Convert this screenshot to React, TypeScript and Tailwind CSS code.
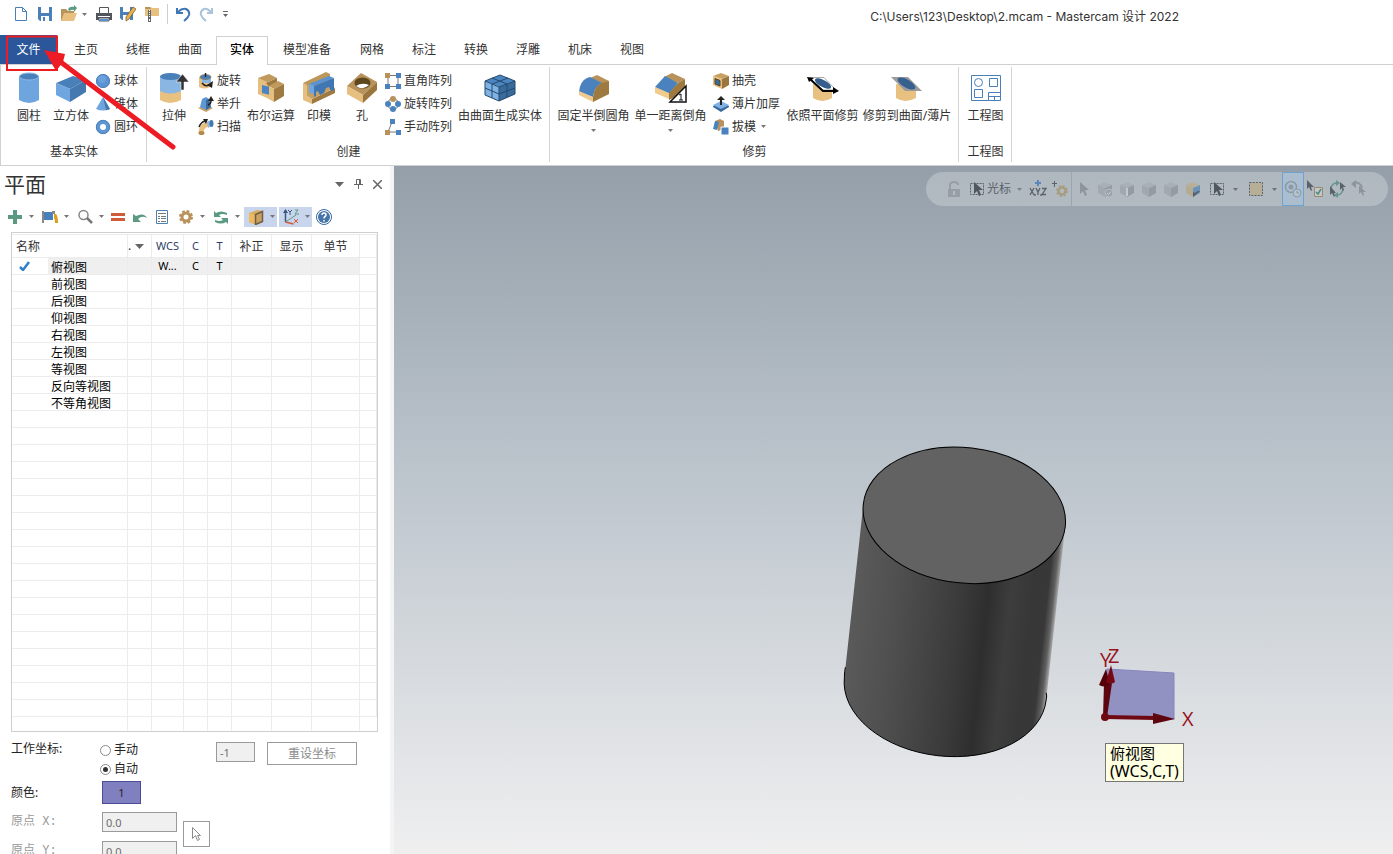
import React from "react";
import { clsx } from "clsx";

type IconProps = { className?: string };

const Svg = ({ size = 16, children }: { size?: number; children: React.ReactNode }) => (
  <svg width={size} height={size} viewBox={`0 0 ${size} ${size}`} fill="none" className="shrink-0" aria-hidden="true">
    {children}
  </svg>
);

const Caret = ({ className = "text-[#777777]" }: IconProps) => (
  <svg width="5" height="3" viewBox="0 0 5 3" className={clsx("shrink-0", className)} aria-hidden="true">
    <path d="M0 0h5L2.5 3z" fill="currentColor" />
  </svg>
);

/* ---------- Quick access icons ---------- */

const NewIcon = () => (
  <Svg>
    <path d="M2.500 1.500h7l4 4v9h-11z" fill="#fff" stroke="#4a7fb5" />
    <path d="M9.500 1.500v4h4" stroke="#4a7fb5" />
  </Svg>
);
const SaveIcon = () => (
  <Svg>
    <path d="M1 1h14v14H3l-2-2z" fill="#4a80b9" />
    <path d="M4 1h8v6H4zM4 10h8v5H4z" fill="#fff" />
    <path d="M6 11h2v4H6z" fill="#4a80b9" />
  </Svg>
);
const OpenIcon = () => (
  <Svg size={18}>
    <path d="M1 4h5l2 2h6v10H1z" fill="#b8935a" />
    <path d="M4 8h13l-3 8H1z" fill="#e8c080" />
    <path d="M8 5q1-4 6-3V0l3 3-3 4V5q-3-1-4 1z" fill="#5a9a80" />
  </Svg>
);
const PrintIcon = () => (
  <Svg>
    <path d="M3.500 1.500h9v6h-9z" fill="#fff" stroke="#555" />
    <path d="M0 7h16v7H0z" fill="#50565c" />
    <path d="M2 10h12v1H2z" fill="#fff" />
    <path d="M3 12h10v3H3z" fill="#fff" stroke="#50565c" />
    <path d="M4 13h8v2H4z" fill="#5590cf" />
  </Svg>
);
const SaveAsIcon = () => (
  <Svg>
    <path d="M0 1h13v13H2l-2-2z" fill="#4a80b9" />
    <path d="M3 1h7v5H3zM3 9h7v5H3z" fill="#fff" />
    <path d="M13 1l3 2-7 10-3 2v-4z" fill="#e8b24e" stroke="#6b5430" strokeWidth=".7" />
  </Svg>
);
const ZipIcon = () => (
  <Svg>
    <path d="M1 1h6l1 1h7v8H1z" fill="#e8c080" />
    <path d="M1 1h5l1 2H1z" fill="#b8935a" />
    <path d="M4 4h3v12H4z" fill="#666" />
    <path d="M5.500 4v8" stroke="#fff" strokeDasharray="1 1" />
    <path d="M5 13h1v2H5z" fill="#fff" />
  </Svg>
);
const UndoIcon = () => (
  <Svg>
    <path d="M2 2v5h6" stroke="#3f77b5" strokeWidth="2" />
    <path d="M3 6q4-4 8-3 4 2 3 6-1 3-5 6" stroke="#3f77b5" strokeWidth="2" />
  </Svg>
);
const RedoIcon = () => (
  <Svg>
    <path d="M13 2v5H8" stroke="#a9c3dc" strokeWidth="2" />
    <path d="M12 6Q8 2 5 3 1 5 2 9q1 3 5 6" stroke="#a9c3dc" strokeWidth="2" />
  </Svg>
);

/* ---------- Ribbon icons, large ---------- */

const CylinderIcon = () => (
  <Svg size={32}>
    <path d="M6 4v24q10 6 20 0V4z" fill="#6fa5de" />
    <ellipse cx="16" cy="4.500" rx="9.500" ry="3.500" fill="#4a80b9" stroke="#8ab8e8" />
  </Svg>
);
const BlockIcon = () => (
  <Svg size={32}>
    <path d="M1 11l17-7 13 4-16 9z" fill="#4a80b9" />
    <path d="M1 11l14 6v13L1 23z" fill="#70a6e0" />
    <path d="M31 8v12L15 30V17z" fill="#4478ae" />
  </Svg>
);
const ExtrudeIcon = () => (
  <Svg size={32}>
    <path d="M2 18v10q10 6 21 0V18z" fill="#e8c080" />
    <path d="M2 4v15q10 5 21 0V4z" fill="#8ab6e4" />
    <ellipse cx="12.500" cy="4.500" rx="10.500" ry="3.500" fill="#4a80b9" />
    <path d="M24.500 2l6.500 8h-5v8h-3v-8h-5z" fill="#333" stroke="#fff" strokeWidth=".5" />
  </Svg>
);
const BooleanIcon = () => (
  <Svg size={32}>
    <path d="M3 6l11-4 8 4-11 5z" fill="#c09a5c" />
    <path d="M3 6l12 5v13l-3 2-9-4z" fill="#e6be80" />
    <path d="M22 6v5l-8 4-3-4z" fill="#9f7a40" />
    <path d="M7 13l8 2v8l-8-2z" fill="#4a84c2" />
    <path d="M14 14l9-5 6 3-10 5z" fill="#c09a5c" />
    <path d="M14 14l5 3v13l-7-4v-3l2 1z" fill="#e6be80" />
    <path d="M19 17l10-5v12l-10 6z" fill="#9f7a40" />
  </Svg>
);
const ImpressIcon = () => (
  <Svg size={32}>
    <path d="M0 11L23 0l4 2v6L4 18z" fill="#bd965a" />
    <path d="M0 11l4 2v11l5 3v5l-9-4z" fill="#e6be80" />
    <path d="M9 27l23-11v5L9 32z" fill="#9f7a40" />
    <path d="M4 14l24-9v8l4 3L9 27l-5-3z" fill="#c8a062" />
    <path d="M6 12l20-8 5 2-20 8z" fill="#5b93d2" />
    <path d="M6 12l5 2v8l-5-1z" fill="#70a6e0" />
    <path d="M11 14L31 6v12l-3 1-2-4-3 1-2 5-4 2-2-4-2 1v4l-2 1z" fill="#3f76b4" />
  </Svg>
);
const HoleIcon = () => (
  <Svg size={32}>
    <path d="M1 14L15 1l16 9-14 13z" fill="#b8925a" />
    <path d="M1 14l16 9v8L1 22z" fill="#e6be80" />
    <path d="M17 23l14-13v8L17 31z" fill="#9a763e" />
    <ellipse cx="16.500" cy="11" rx="8" ry="5.500" fill="#5e461d" />
    <path d="M10 14q6-4 13-1-6 6-13 1z" fill="#fff" />
  </Svg>
);
const SurfaceSolidIcon = () => (
  <Svg size={32}>
    <path d="M1 9l15-6 15 6-15 6z" fill="#4c86c2" />
    <path d="M1 9l14 6v14L1 23z" fill="#7eb2e5" />
    <path d="M31 9v13l-16 7V15z" fill="#386a9c" />
    <path d="M1 9l14 6 16-6-15-6zM1 9v14l14 6 16-7V9M15 15v14M8 6l15 6v13M24 6L8 12v14M1 16l14 6 16-6" stroke="#244a6d" />
  </Svg>
);
const FilletIcon = () => (
  <Svg size={32}>
    <path d="M12 6l7-3 12 6-7 4z" fill="#b8925a" />
    <path d="M1 20Q2 9 9 6l3-1 12 6q-8 4-9 14z" fill="#4a82bf" />
    <path d="M15 25q1-11 9-14l7-2v13l-16 8z" fill="#9f7a40" />
    <path d="M1 19l14 6v5L1 23z" fill="#efcb8e" />
  </Svg>
);
const ChamferIcon = () => (
  <Svg size={32}>
    <path d="M9 5l8-4 13 6-7 4z" fill="#b8925a" />
    <path d="M0 15L10 4l13 7-9 11z" fill="#4a82bf" />
    <path d="M0 15l14 6v6L0 21z" fill="#efcb8e" />
    <path d="M14 21l9-10 7-4v13l-16 8z" fill="#9f7a40" />
    <path d="M31 14v16H15z" fill="#fff" stroke="#111" strokeWidth="1.500" />
    <path d="M24 23l2-1v6m-2 0h4" stroke="#111" />
  </Svg>
);
const TrimPlaneIcon = () => (
  <Svg size={32}>
    <path d="M6 12v14q9 6 19 0V14z" fill="#e8c080" />
    <path d="M2 5.500h15L29 18H16z" fill="#fff" stroke="#aaa" />
    <ellipse cx="16" cy="11.500" rx="9" ry="3.500" transform="rotate(28 16 11.500)" fill="#355e8c" />
    <path d="M3 7l13 12h12" stroke="#000" strokeWidth="2" />
    <path d="M0 5l7 1-5 4zM32 19l-6-4v7z" fill="#000" />
  </Svg>
);
const TrimSurfaceIcon = () => (
  <Svg size={32}>
    <path d="M5 12v14q9 6 20 0V14z" fill="#e8c080" />
    <path d="M0 5h17l14 14H14z" fill="#9b9b9e" />
    <ellipse cx="15.500" cy="11.500" rx="10" ry="4" transform="rotate(30 15.500 11.500)" fill="#37608f" />
  </Svg>
);
const DrawingIcon = () => (
  <Svg size={32}>
    <g stroke="#4a80b9">
      <path d="M1.500 3.500h29v25h-29z" />
      <circle cx="8.500" cy="10.500" r="4" />
      <path d="M19.500 6.500h8v8h-8zM4.500 17.500h8v8h-8zM18.500 20.500h12M18.500 20.500v8M18.500 24.500h12M24.500 24.500v4" />
    </g>
  </Svg>
);

/* ---------- Ribbon icons, small ---------- */

const SphereIcon = () => (
  <Svg>
    <circle cx="8" cy="8" r="7" fill="#5b93d2" />
    <circle cx="7" cy="6" r="4" fill="#6aa0dc" />
    <circle cx="8" cy="8" r="6.500" stroke="#4c80b8" />
  </Svg>
);
const ConeIcon = () => (
  <Svg>
    <path d="M8 1L1 13q7 3 14 0z" fill="#6fa5de" />
    <path d="M8 1l7 12q-2 1-4 1z" fill="#4478ae" />
  </Svg>
);
const TorusIcon = () => (
  <Svg>
    <circle cx="8" cy="8" r="5" stroke="#5e96d3" strokeWidth="4" />
    <circle cx="8" cy="8" r="6.700" stroke="#4c80b8" />
  </Svg>
);
const RevolveIcon = () => (
  <Svg>
    <path d="M1 4v10q5 3 11 0V4z" fill="#e8c080" />
    <path d="M4 4h9v6H4z" fill="#8ab6e4" />
    <ellipse cx="7.500" cy="4" rx="5.500" ry="2.500" fill="#4a80b9" stroke="#8a6c38" strokeWidth=".6" />
    <path d="M7.500 0v4M4 10q3 4 7 2" stroke="#222" strokeWidth="1.500" />
    <path d="M15 8l-1 7-5-3z" fill="#222" />
  </Svg>
);
const LoftIcon = () => (
  <Svg>
    <path d="M0 12l8-3 7 3-7 4z" fill="#c8a062" />
    <path d="M4 3l4-2 3 2 2 8-5 3-6-3z" fill="#5f97d5" />
    <path d="M8 4l3-1 2 8-5 3z" fill="#386a9c" />
    <path d="M10 9q3-1 3-4" stroke="#222" strokeWidth="1.500" />
    <path d="M13 0l3 5h-6z" fill="#222" />
  </Svg>
);
const SweepIcon = () => (
  <Svg>
    <path d="M3 14q0-8 8-9" stroke="#e8c080" strokeWidth="5" />
    <ellipse cx="3.500" cy="14" rx="3" ry="2" fill="#b18a4c" />
    <path d="M9 3l4-2 2 5-5 3z" fill="#8ab6e4" />
    <ellipse cx="13.500" cy="4.500" rx="2" ry="3.500" fill="#4478ae" />
    <path d="M1 8q2-5 6-6" stroke="#222" strokeWidth="1.500" />
    <path d="M5 0h5L8 5z" fill="#222" />
  </Svg>
);
const RectPatternIcon = () => (
  <Svg>
    <path d="M3 2.500h10v11H3z" stroke="#777" />
    <path d="M0 0h5v5H0z" fill="#b8925a" />
    <path d="M11 0h5v5h-5zM0 11h5v5H0zM11 11h5v5h-5z" fill="#4a82bf" />
  </Svg>
);
const RoundPatternIcon = () => (
  <Svg>
    <circle cx="8" cy="8" r="5.500" stroke="#777" />
    <circle cx="8" cy="3" r="3" fill="#b8925a" />
    <circle cx="3" cy="8" r="3" fill="#4a82bf" />
    <circle cx="13" cy="8" r="3" fill="#4a82bf" />
    <circle cx="8" cy="13" r="3" fill="#4a82bf" />
  </Svg>
);
const ManualPatternIcon = () => (
  <Svg>
    <path d="M7 3L3 13h10" stroke="#777" />
    <path d="M5 0h5v5H5zM11 11h5v5h-5z" fill="#4a82bf" />
    <path d="M0 11h5v5H0z" fill="#b8925a" />
  </Svg>
);
const ShellIcon = () => (
  <Svg>
    <path d="M0 3l8-3 8 3-7 3z" fill="#c8a062" />
    <path d="M9 6l7-3v9l-7 4z" fill="#9a763e" />
    <path d="M0 3l9 3v10l-9-4z" fill="#e6be80" />
    <path d="M2 5.500l5 2v5.500l-5-2z" fill="#386a9c" stroke="#5e461d" />
  </Svg>
);
const ThickenIcon = () => (
  <Svg>
    <path d="M0 10l8-4 8 4v1l-8 5-8-5z" fill="#386a9c" />
    <path d="M0 9l8-4 8 4-8 4z" fill="#7eb2e5" />
    <path d="M8 0l4 4H9v5H7V4H4z" fill="#222" />
  </Svg>
);
const DraftIcon = () => (
  <Svg>
    <path d="M2 2l5-2 4 2v8l-6 2z" fill="#b8925a" />
    <path d="M2 2l4 1-2 8-4-1z" fill="#4a82bf" />
    <path d="M8 8h8v8H8z" fill="#4a82bf" stroke="#fff" />
  </Svg>
);

/* ---------- Panel toolbar icons ---------- */

const PlusIcon = () => (
  <Svg>
    <path d="M6 1h4v5h5v4h-5v5H6v-5H1V6h5z" fill="#5a9a80" />
  </Svg>
);
const FlagIcon = () => (
  <Svg>
    <path d="M1 2v12" stroke="#888" strokeWidth="2" />
    <path d="M2 3h9v8H2z" fill="#4a80b9" />
    <path d="M10 2h3v3h-3z" fill="#888" />
    <path d="M12 5h2q2 2 2 9h-3q0-4-1-5z" fill="#d8a01d" />
  </Svg>
);
const SearchIcon = () => (
  <Svg>
    <circle cx="6.500" cy="6" r="4.500" stroke="#888" strokeWidth="1.500" />
    <path d="M10 9l5 5" stroke="#777" strokeWidth="2.500" />
  </Svg>
);
const EqualIcon = () => (
  <Svg>
    <path d="M1 4h14v3H1zM1 9h14v3H1z" fill="#d15a38" />
  </Svg>
);
const BackIcon = () => (
  <Svg>
    <path d="M1 5v8h8L6 10q4-4 9-1-3-6-11-2z" fill="#5a9a80" />
  </Svg>
);
const ListIcon = () => (
  <Svg>
    <path d="M2.500 1.500h11v13h-11z" stroke="#4a80b9" />
    <path d="M4 4.500h8M4 7.500h2m1 0h5M4 9.500h2m1 0h5M4 12.500h2m1 0h5" stroke="#777" />
  </Svg>
);
const GearIcon = ({ color = "#b8925a" }: { color?: string }) => (
  <Svg>
    <circle cx="8" cy="8" r="4" stroke={color} strokeWidth="3" />
    <circle cx="8" cy="8" r="6" stroke={color} strokeWidth="2" strokeDasharray="2.700 2.010" />
  </Svg>
);
const RefreshIcon = () => (
  <Svg>
    <path d="M1 2l2 2q5-3 11 0v2Q9 4 6 6l2 2H1z" fill="#5a9a80" />
    <path d="M15 15l-2-2q-5 3-11 0v-2q5 2 8 0L8 9h7z" fill="#5a9a80" />
  </Svg>
);
const PlaneBlockIcon = () => (
  <Svg>
    <path d="M1 4l8-3 6 1v11l-7 3-7-3z" fill="#d9ac62" />
    <path d="M1 4l6 2v9l-6-2z" fill="#efb95e" />
    <path d="M7.500 5.500l7-3v10l-7 3z" fill="#c8a062" stroke="#6e6048" strokeWidth="1.500" />
  </Svg>
);
const AxesIcon = () => (
  <Svg>
    <path d="M2.500 1v12" stroke="#39587d" strokeWidth="1.500" />
    <path d="M2.500 13L13 6" stroke="#5a9a80" />
    <path d="M2.500 13l8 2" stroke="#d15a38" strokeWidth="1.500" />
    <path d="M0 4l2.500-4L5 4z" fill="#39587d" />
    <path d="M5 1l2 2 2-2M7 3v3" stroke="#39587d" />
    <path d="M12 1h3l-3 4h4" stroke="#5a9a80" />
    <path d="M11 10l4 4m0-4l-4 4" stroke="#d15a38" />
  </Svg>
);
const HelpIcon = () => (
  <Svg>
    <circle cx="8" cy="8" r="7.500" stroke="#39699f" />
    <circle cx="8" cy="8" r="6" fill="#4675a9" />
    <path d="M6 6q0-2 2-2t2 2q0 1-1 1.500T8 9.500M8 11v1.500" stroke="#fff" strokeWidth="1.500" />
  </Svg>
);

/* ---------- Selection bar icons ---------- */

const pointer = "M5 1v12l3-3 2 5 2-1-2-5h4z";

const LockIcon = () => (
  <Svg>
    <path d="M4 8V4q0-3 4-3t4 3" stroke="#979ea5" strokeWidth="2" />
    <path d="M2 8h12v8H2z" fill="#979ea5" />
    <path d="M7 10h2v4H7z" fill="#b3bac1" />
  </Svg>
);
const BoxSelectIcon = () => (
  <Svg>
    <path d="M1.500 2.500h13v11h-13z" stroke="#59616a" strokeDasharray="2 1" />
    <path d={pointer} fill="#4f5760" />
  </Svg>
);
const XyzIcon = () => (
  <Svg size={18}>
    <path d="M9 0v6M6 3h6" stroke="#5c87b8" strokeWidth="2" />
    <path d="M1 8l4 7M5 8l-4 7M7 8l2 4 2-4M9 12v3M13 8.500h4l-4 6h4M6 14v2M12 14v2" stroke="#59616a" strokeWidth="1.300" />
  </Svg>
);
const GearAddIcon = () => (
  <Svg size={18}>
    <path d="M3.500 1v6M1 3.500h5" stroke="#59616a" />
    <circle cx="11" cy="11" r="3.500" stroke="#a79d7f" strokeWidth="2.500" />
    <circle cx="11" cy="11" r="5" stroke="#a79d7f" strokeWidth="2" strokeDasharray="2 1.930" />
  </Svg>
);
const PointerIcon = () => (
  <Svg>
    <path d={pointer} fill="#8d949c" />
  </Svg>
);
const CubeIcon = ({ variant = "plain" }: { variant?: "plain" | "edge" | "check" | "color" }) => (
  <Svg>
    <path d="M1 4l7-3 7 3-7 3z" fill={variant === "color" ? "#b9b09a" : "#a9b0b7"} />
    <path d="M1 4l7 3v9l-7-4z" fill={variant === "color" ? "#b5ab92" : "#a1a8af"} />
    <path d="M15 4v8l-7 4V7z" fill={variant === "color" ? "#6c93b6" : "#949ba2"} />
    {variant === "edge" && <path d="M8 7v8" stroke="#c3c9ce" strokeWidth="2" />}
    {variant === "check" && (
      <>
        <circle cx="12" cy="12" r="4" fill="#9aa1a8" stroke="#b9bfc5" />
        <path d="M10 12l1.500 1.500L14 10.500" stroke="#d0d4d8" />
      </>
    )}
    {variant === "color" && <path d="M15 10l-7 6v-5l2 1 3-2z" fill="#555d66" />}
  </Svg>
);
const AreaIcon = () => (
  <Svg>
    <path d="M1.500 1.500h13v13h-13z" fill="#b7ae98" stroke="#59616a" strokeDasharray="2 1.200" />
  </Svg>
);
const TargetClockIcon = () => (
  <Svg size={18}>
    <circle cx="7" cy="7" r="5.500" stroke="#8c9aa6" strokeWidth="1.500" />
    <circle cx="7" cy="7" r="2.500" fill="#8c9aa6" />
    <circle cx="13" cy="13" r="4" fill="#b4c2ce" stroke="#8c9aa6" />
    <path d="M13 11v2h2" stroke="#8c9aa6" />
  </Svg>
);
const ClipboardIcon = () => (
  <Svg size={18}>
    <path d="M1 0v9l2-2 2 4 1-1-1-3h3z" fill="#59616a" />
    <path d="M8.500 7.500h8v9h-8z" fill="#c4c8cc" stroke="#9b8b69" />
    <path d="M10 12l2 2 3-5" stroke="#4a8f7a" strokeWidth="1.500" />
  </Svg>
);
const CycleIcon = () => (
  <Svg size={18}>
    <path d="M3 8q1-5 6-5M15 9q-1 6-6 6" stroke="#66958a" strokeWidth="1.500" />
    <path d="M8 0l4 3-4 3zM10 12l-4 3 4 3z" fill="#66958a" />
    <path d="M2 6v9l2-2 2 4 1-1-1-3h2zM12 2v8l2-2 1 3 1-1-1-3h3z" fill="#59616a" />
  </Svg>
);
const UndoSelectIcon = () => (
  <Svg size={18}>
    <path d="M3 3q7-2 9 5" stroke="#8d949c" strokeWidth="2" />
    <path d="M1 4l5-4v8z" fill="#8d949c" />
    <path d="M9 6v8l2-2 2 4 1-1-1-3h3z" fill="#8d949c" />
  </Svg>
);

/* ---------- Ribbon ---------- */

const BigButton = ({
  icon,
  label,
  width,
  menu,
}: {
  icon: React.ReactNode;
  label: string;
  width: string;
  menu?: boolean;
}) => (
  <button type="button" className={clsx("flex shrink-0 flex-col items-center whitespace-nowrap", width)}>
    {icon}
    <span className="mt-1 leading-4">{label}</span>
    {menu && <Caret className="mt-[5px] text-[#777777]" />}
  </button>
);

type SmallItem = { icon: React.ReactNode; label: string; menu?: boolean };

const SmallColumn = ({ items, className }: { items: SmallItem[]; className?: string }) => (
  <div className={clsx("-mt-[3px] flex shrink-0 flex-col", className)}>
    {items.map((item) => (
      <button key={item.label} type="button" className="flex h-[23px] items-center gap-[3px] whitespace-nowrap leading-4">
        {item.icon}
        {item.label}
        {item.menu && <Caret className="ml-[2px] text-[#777777]" />}
      </button>
    ))}
  </div>
);

const RibbonGroup = ({
  title,
  className,
  children,
}: {
  title: string;
  className?: string;
  children: React.ReactNode;
}) => (
  <section className="relative flex shrink-0 flex-col pb-[3px] after:absolute after:right-0 after:top-[2px] after:bottom-[3px] after:w-px after:bg-[#d5d5d5]">
    <div className={clsx("flex flex-1 items-start pt-[7px]", className)}>{children}</div>
    <h2 className="text-center leading-5">{title}</h2>
  </section>
);

const tabs = ["主页", "线框", "曲面", "实体", "模型准备", "网格", "标注", "转换", "浮雕", "机床", "视图"];

const Ribbon = () => (
  <div className="flex h-[101px] shrink-0 border-b border-l border-[#d0d0d0]">
    <RibbonGroup title="基本实体" className="pl-[7px] pr-[9px]">
      <BigButton icon={<CylinderIcon />} label="圆柱" width="w-[42px]" />
      <BigButton icon={<BlockIcon />} label="立方体" width="w-[42px]" />
      <SmallColumn
        className="ml-[3px]"
        items={[
          { icon: <SphereIcon />, label: "球体" },
          { icon: <ConeIcon />, label: "锥体" },
          { icon: <TorusIcon />, label: "圆环" },
        ]}
      />
    </RibbonGroup>
    <RibbonGroup title="创建" className="px-[6px]">
      <BigButton icon={<ExtrudeIcon />} label="拉伸" width="w-[42px]" />
      <SmallColumn
        className="ml-[3px] mr-1"
        items={[
          { icon: <RevolveIcon />, label: "旋转" },
          { icon: <LoftIcon />, label: "举升" },
          { icon: <SweepIcon />, label: "扫描" },
        ]}
      />
      <BigButton icon={<BooleanIcon />} label="布尔运算" width="w-[52px]" />
      <BigButton icon={<ImpressIcon />} label="印模" width="w-[44px]" />
      <BigButton icon={<HoleIcon />} label="孔" width="w-[42px]" />
      <SmallColumn
        className="ml-[2px] mr-1"
        items={[
          { icon: <RectPatternIcon />, label: "直角阵列" },
          { icon: <RoundPatternIcon />, label: "旋转阵列" },
          { icon: <ManualPatternIcon />, label: "手动阵列" },
        ]}
      />
      <BigButton icon={<SurfaceSolidIcon />} label="由曲面生成实体" width="w-[88px]" />
    </RibbonGroup>
    <RibbonGroup title="修剪" className="pl-[5px] pr-[6px]">
      <BigButton icon={<FilletIcon />} label="固定半倒圆角" width="w-[77px]" menu />
      <BigButton icon={<ChamferIcon />} label="单一距离倒角" width="w-[77px]" menu />
      <SmallColumn
        className="mx-1"
        items={[
          { icon: <ShellIcon />, label: "抽壳" },
          { icon: <ThickenIcon />, label: "薄片加厚" },
          { icon: <DraftIcon />, label: "拔模", menu: true },
        ]}
      />
      <BigButton icon={<TrimPlaneIcon />} label="依照平面修剪" width="w-[77px]" />
      <BigButton icon={<TrimSurfaceIcon />} label="修剪到曲面/薄片" width="w-[92px]" />
    </RibbonGroup>
    <RibbonGroup title="工程图">
      <BigButton icon={<DrawingIcon />} label="工程图" width="w-[53px]" />
    </RibbonGroup>
  </div>
);

/* ---------- Planes panel ---------- */

const planes = ["俯视图", "前视图", "后视图", "仰视图", "右视图", "左视图", "等视图", "反向等视图", "不等角视图"];
const emptyRows = Array.from({ length: 18 }, (_, i) => i);

const ToolButton = ({
  icon,
  label,
  menu,
  active,
}: {
  icon: React.ReactNode;
  label: string;
  menu?: boolean;
  active?: boolean;
}) => (
  <button
    type="button"
    aria-label={label}
    className={clsx("flex h-5 items-center gap-[6px]", menu ? "w-[33px] pl-1" : "w-5 justify-center", active && "bg-[#c8d5ed]")}
  >
    {icon}
    {menu && <Caret />}
  </button>
);

const PlanesTable = () => {
  const cell = "border-b border-r border-[#ececec] text-center font-normal";
  const latinHead = clsx(cell, "p-0 text-[11px] text-[#2d3f66]");
  return (
    <div className="ml-[11px] mr-[16px] h-[500px] overflow-hidden border border-[#cfcfcf] pt-px">
      <table className="w-full table-fixed border-separate border-spacing-0 border-t border-[#ececec] text-[12px] leading-4">
        <colgroup>
          <col className="w-[116px]" />
          <col className="w-[24px]" />
          <col className="w-[32px]" />
          <col className="w-[24px]" />
          <col className="w-[24px]" />
          <col className="w-[40px]" />
          <col className="w-[40px]" />
          <col className="w-[48px]" />
          <col />
        </colgroup>
        <thead className="text-[#333333]">
          <tr className="h-[23px]">
            <th className="border-b border-r border-[#ececec] pl-1 pt-[2px] text-left font-normal">名称</th>
            <th className={clsx(cell, "p-0")}>
              <span className="flex items-center gap-1">
                .
                <svg width="9" height="5" viewBox="0 0 9 5" aria-hidden="true">
                  <path d="M0 0h9L4.500 5z" fill="#666" />
                </svg>
              </span>
            </th>
            <th className={latinHead}>WCS</th>
            <th className={latinHead}>C</th>
            <th className={latinHead}>T</th>
            <th className={clsx(cell, "pt-[2px]")}>补正</th>
            <th className={clsx(cell, "pt-[2px]")}>显示</th>
            <th className={clsx(cell, "pt-[2px]")}>单节</th>
            <th className={cell} />
          </tr>
        </thead>
        <tbody className="text-black">
          {planes.map((name, i) => {
            const shade = i === 0 ? "bg-[#efefef]" : "";
            const c = clsx(cell, "p-0 text-[11px]", shade);
            return (
              <tr key={name} className="h-[17px]">
                <td className="border-b border-r border-[#ececec] p-0">
                  <div className="flex h-4">
                    <span className="flex w-[36px] shrink-0 items-center justify-center pr-[10px]">
                      {i === 0 && (
                        <svg width="12" height="10" viewBox="0 0 12 10" fill="none" aria-label="当前平面">
                          <path d="M1 6l3 3 6-8" stroke="#2f80c8" strokeWidth="2.500" />
                        </svg>
                      )}
                    </span>
                    <span className={clsx("flex-1 whitespace-nowrap pl-[3px] pt-[2px]", shade)}>{name}</span>
                  </div>
                </td>
                <td className={c} />
                <td className={c}>{i === 0 && "W..."}</td>
                <td className={c}>{i === 0 && "C"}</td>
                <td className={c}>{i === 0 && "T"}</td>
                <td className={c} />
                <td className={c} />
                <td className={c} />
                <td className={cell} />
              </tr>
            );
          })}
          {emptyRows.map((row) => (
            <tr key={row} className="h-[17px]">
              {Array.from({ length: 9 }, (_, i) => (
                <td key={i} className={cell} />
              ))}
            </tr>
          ))}
        </tbody>
      </table>
      {/* column rules run on below the last full row */}
      <div className="ml-[115px] flex h-4">
        <span className="w-px bg-[#ececec]" />
        <span className="w-[24px] border-r border-[#ececec]" />
        <span className="w-[32px] border-r border-[#ececec]" />
        <span className="w-[24px] border-r border-[#ececec]" />
        <span className="w-[24px] border-r border-[#ececec]" />
        <span className="w-[40px] border-r border-[#ececec]" />
        <span className="w-[40px] border-r border-[#ececec]" />
        <span className="w-[48px] border-r border-[#ececec]" />
      </div>
    </div>
  );
};

const originFields = [
  { id: "origin-x", label: "原点 X:" },
  { id: "origin-y", label: "原点 Y:" },
];

const PlanesForm = () => (
  <form className="grid grid-cols-[91px_1fr] pl-[11px] pt-[10px] text-[12px] leading-4 text-[#222222]">
    <span className="-mt-px">工作坐标:</span>
    <div className="flex items-start">
      <div className="-ml-[2px] flex w-[116px] flex-col gap-[3px]">
        {["手动", "自动"].map((mode) => (
          <label key={mode} className="flex items-center gap-[3px]">
            <input
              type="radio"
              name="mode"
              defaultChecked={mode === "自动"}
              className="size-[11px] appearance-none rounded-full border border-[#8a8a8a] bg-white bg-clip-content p-[2px] checked:bg-[#333333]"
            />
            {mode}
          </label>
        ))}
      </div>
      <input
        aria-label="工作坐标"
        defaultValue="-1"
        disabled
        className="h-5 w-[39px] border border-[#9a9a9a] bg-[#f0f0f0] pl-[3px] text-[11px] text-[#6d6d6d]"
      />
      <button type="button" disabled className="ml-3 h-[23px] w-[90px] border border-[#9a9a9a] text-[#8c8c8c]">
        重设坐标
      </button>
    </div>
    <span className="pt-[8px]">颜色:</span>
    <button type="button" aria-label="颜色" className="mt-1 h-[23px] w-[39px] border border-[#4b4b98] bg-[#807fbf] text-[11px]">
      1
    </button>
    <div className="flex flex-col gap-[13px] pt-[10px] font-['Liberation_Mono','Noto_Sans_CJK_SC',monospace] text-[#9a9a9a]">
      {originFields.map(({ id, label }) => (
        <label key={id} htmlFor={id} className="whitespace-nowrap">
          {label}
        </label>
      ))}
    </div>
    <div className="flex items-start gap-[6px] pt-2">
      <div className="flex flex-col gap-[9px]">
        {originFields.map(({ id }) => (
          <input
            key={id}
            id={id}
            defaultValue="0.0"
            disabled
            className="h-5 w-[75px] border border-[#9a9a9a] bg-[#f0f0f0] pl-[3px] text-[11px] text-[#6d6d6d]"
          />
        ))}
      </div>
      <button type="button" aria-label="选择原点" className="mt-[9px] flex h-[26px] w-[27px] items-center justify-center border border-[#9a9a9a]">
        <svg width="11" height="16" viewBox="0 0 11 16" fill="none" aria-hidden="true">
          <path d="M1.500 1.500v11l3-3 2 5 2-1-2-4h3z" stroke="#8c8c8c" />
        </svg>
      </button>
    </div>
  </form>
);

const PlanesPanel = () => (
  <aside className="w-[394px] shrink-0 overflow-hidden border-r-4 border-[#f4f4f4] bg-white">
    <div className="-mr-1">
      <div className="flex h-9 items-center pl-1 pr-[10px]">
        <h1 className="flex-1 text-[21px] leading-8 text-[#333333]">平面</h1>
        <div className="flex items-center gap-[10px] text-[#666666]">
          <button type="button" aria-label="菜单">
            <svg width="9" height="5" viewBox="0 0 9 5" aria-hidden="true">
              <path d="M0 0h9L4.500 5z" fill="currentColor" />
            </svg>
          </button>
          <button type="button" aria-label="固定">
            <svg width="9" height="10" viewBox="0 0 9 10" fill="none" stroke="currentColor" aria-hidden="true">
              <path d="M2.500 5.500v-5h4v5M5.500.500v5M0 5.500h9M4.500 6v4" />
            </svg>
          </button>
          <button type="button" aria-label="关闭" className="pr-[2px]">
            <svg width="9" height="9" viewBox="0 0 9 9" fill="none" stroke="currentColor" strokeWidth="1.500" aria-hidden="true">
              <path d="M0 0l9 9M9 0L0 9" />
            </svg>
          </button>
        </div>
      </div>
      <div className="flex h-[30px] items-center gap-[2px] pb-px pl-[3px]">
        <ToolButton icon={<PlusIcon />} label="新建平面" menu />
        <ToolButton icon={<FlagIcon />} label="选择车床平面" menu />
        <ToolButton icon={<SearchIcon />} label="查找" menu />
        <ToolButton icon={<EqualIcon />} label="设为相等" />
        <ToolButton icon={<BackIcon />} label="重设" />
        <ToolButton icon={<ListIcon />} label="属性" />
        <ToolButton icon={<GearIcon />} label="显示选项" menu />
        <ToolButton icon={<RefreshIcon />} label="跟随规则" menu />
        <ToolButton icon={<PlaneBlockIcon />} label="截面视图" menu active />
        <ToolButton icon={<AxesIcon />} label="显示指针" menu active />
        <ToolButton icon={<HelpIcon />} label="帮助" />
      </div>
      <PlanesTable />
      <PlanesForm />
    </div>
  </aside>
);

/* ---------- Viewport ---------- */

const BarButton = ({ icon, label, active }: { icon: React.ReactNode; label: string; active?: boolean }) => (
  <button
    type="button"
    aria-label={label}
    className={clsx(
      "flex h-[34px] w-[22px] shrink-0 items-center justify-center",
      active && "border border-[#6ea3cf] bg-[#abbecf]"
    )}
  >
    {icon}
  </button>
);

const SelectionBar = () => (
  <div className="absolute right-[5px] top-[6px] flex h-[34px] items-center rounded-full bg-white/25 pl-[17px] pr-[18px]">
    <BarButton icon={<LockIcon />} label="锁定" />
    <button type="button" className="flex h-[34px] w-[62px] shrink-0 items-center gap-[2px] pl-1 leading-4 text-[#59616a]">
      <BoxSelectIcon />
      光标
      <Caret className="ml-1 text-[#7b838b]" />
    </button>
    <BarButton icon={<XyzIcon />} label="坐标输入" />
    <BarButton icon={<GearAddIcon />} label="选择设置" />
    <span className="h-full w-px bg-[#9ca4ac]" />
    <BarButton icon={<PointerIcon />} label="选择" />
    <BarButton icon={<CubeIcon variant="check" />} label="选择实体" />
    <BarButton icon={<CubeIcon variant="edge" />} label="选择边缘" />
    <BarButton icon={<CubeIcon />} label="选择面" />
    <BarButton icon={<CubeIcon />} label="选择主体" />
    <BarButton icon={<CubeIcon variant="color" />} label="选择背面" />
    <span className="w-[2px]" />
    <BarButton icon={<BoxSelectIcon />} label="选择方式" />
    <span className="flex w-[17px] justify-center pr-[2px]">
      <Caret className="text-[#69717a]" />
    </span>
    <BarButton icon={<AreaIcon />} label="范围" />
    <span className="flex w-[15px] justify-center">
      <Caret className="text-[#69717a]" />
    </span>
    <BarButton icon={<TargetClockIcon />} label="最近选择" active />
    <BarButton icon={<ClipboardIcon />} label="验证选择" />
    <BarButton icon={<CycleIcon />} label="反向选择" />
    <BarButton icon={<UndoSelectIcon />} label="上次选择" />
  </div>
);

const SolidCylinder = () => (
  <svg className="absolute left-[446px] top-[274px]" width="230" height="320" viewBox="0 0 230 320" aria-label="圆柱实体">
    <defs>
      <linearGradient id="side" gradientUnits="userSpaceOnUse" x1="23.400" y1="64" x2="225.200" y2="86.100">
        <stop offset="0" stopColor="#5a5a5a" />
        <stop offset=".08" stopColor="#565656" />
        <stop offset=".2" stopColor="#505050" />
        <stop offset=".37" stopColor="#454545" />
        <stop offset=".53" stopColor="#3a3a3a" />
        <stop offset=".66" stopColor="#2e2e2e" />
        <stop offset=".77" stopColor="#3d3d3d" />
        <stop offset=".88" stopColor="#373737" />
        <stop offset=".95" stopColor="#383838" />
        <stop offset=".98" stopColor="#606060" />
        <stop offset="1" stopColor="#a8a8a8" />
      </linearGradient>
    </defs>
    {/* radii a touch under half the chord, so the arc is an exact half ellipse */}
    <path d="M23.400 64L4.400 237.200A101.500 67.600 6.450 0 0 206.200 259.800L225.200 86.600z" fill="url(#side)" />
    <path d="M4.400 237.200A101.500 67.600 6.450 0 0 206.200 259.800" fill="none" stroke="#000" />
    <path d="M4.400 237.200q0-6 1-10M206.200 259.800q1-4 0-7" fill="none" stroke="#000" />
    <ellipse cx="124.300" cy="75.300" rx="101.600" ry="67.700" transform="rotate(6.450 124.300 75.300)" fill="#626262" stroke="#000" />
  </svg>
);

const AxisGnomon = () => (
  <svg
    className="absolute left-[701px] top-[469px] font-['Open_Sans',sans-serif]"
    width="110"
    height="105"
    viewBox="0 -10 110 105"
    aria-label="坐标轴"
  >
    <path d="M12 24l67 4v46l-68-3z" fill="#9292c2" stroke="#8585bd" />
    <path d="M10 72l1-34M10 72l5-34" stroke="#5e0610" strokeWidth="4" />
    <path d="M10 72l50 1" stroke="#6e0913" strokeWidth="4" />
    <path d="M11 24l4 16q-5 3-11 0z" fill="#540008" />
    <path d="M16 20l4 17q-4 3-9 0z" fill="#780812" />
    <path d="M58 68l22 6-22 5z" fill="#5e0610" />
    <circle cx="10" cy="72" r="4" fill="#6e0913" />
    <g fill="#96131b" fontSize="20">
      <text x="5" y="22">Y</text>
      <text x="13" y="18">Z</text>
      <text x="87" y="81">X</text>
    </g>
  </svg>
);

const Viewport = () => (
  <main className="relative min-w-0 flex-1 overflow-hidden bg-linear-to-b/srgb from-[#949fa9] via-[#b8c1c9] via-40% to-[#efeff0]">
    <SelectionBar />
    <SolidCylinder />
    <AxisGnomon />
    <div role="tooltip" className="absolute left-[711px] top-[577px] border border-[#767676] bg-[#ffffe1] px-1 text-black">
      <p className="text-[15px] leading-[18px]">俯视图</p>
      <p className="pb-px text-[16px] leading-[18px]">(WCS,C,T)</p>
    </div>
  </main>
);

/* ---------- App ---------- */

const TitleBar = () => (
  <header className="flex h-[35px] shrink-0 items-center pl-[13px]">
    <div className="-mt-[7px] flex items-center">
      <button type="button" aria-label="新建"><NewIcon /></button>
      <button type="button" aria-label="保存" className="ml-2"><SaveIcon /></button>
      <button type="button" aria-label="打开" className="ml-[7px] flex items-center gap-1"><OpenIcon /><Caret /></button>
      <button type="button" aria-label="打印" className="ml-[9px]"><PrintIcon /></button>
      <button type="button" aria-label="另存为" className="ml-2"><SaveAsIcon /></button>
      <button type="button" aria-label="打包" className="ml-2"><ZipIcon /></button>
      <span className="ml-[7px] h-5 w-px bg-[#cfcfcf]" />
      <button type="button" aria-label="撤消" className="ml-[7px]"><UndoIcon /></button>
      <button type="button" aria-label="重做" className="ml-2"><RedoIcon /></button>
      <button type="button" aria-label="自定义快速访问工具栏" className="ml-2">
        <svg width="5" height="6" viewBox="0 0 5 6" aria-hidden="true">
          <path d="M0 0h5v1H0zM0 3h5L2.500 6z" fill="#666" />
        </svg>
      </button>
    </div>
    <p className="ml-auto mr-[214px] whitespace-nowrap pb-px font-['Inter','Noto_Sans_CJK_SC',sans-serif] text-[12px] leading-4 text-[#333333]">
      C:\Users\123\Desktop\2.mcam - Mastercam 设计 2022
    </p>
  </header>
);

const TabBar = () => (
  <nav className="flex h-[30px] shrink-0 border-b border-[#d0d0d0] leading-4">
    <button type="button" className="mr-[3px] h-[29px] w-[57px] bg-[#2b579a] text-white">
      文件
    </button>
    {tabs.map((tab) => (
      <button
        key={tab}
        type="button"
        className={clsx(
          tab.length > 2 ? "w-[78px]" : "w-[52px]",
          tab === "实体" && "mt-px h-[29px] border border-b-0 border-[#d0d0d0] bg-white pb-[2px] font-medium text-black"
        )}
      >
        {tab}
      </button>
    ))}
  </nav>
);

const Callout = () => (
  <svg className="pointer-events-none absolute left-0 top-[30px]" width="180" height="125" viewBox="0 0 180 125" fill="none" aria-hidden="true">
    <path d="M7 6.500h50V40H7z" stroke="#ed1c24" strokeWidth="2" />
    <path d="M58 30l115 87" stroke="#ed1c24" strokeWidth="5" strokeLinecap="round" />
    <path d="M44 20l21 4-2 8-7 9z" fill="#ed1c24" />
  </svg>
);

export default function App() {
  return (
    <div className="relative flex h-screen flex-col overflow-hidden bg-white font-['Noto_Sans','Noto_Sans_CJK_SC',sans-serif] text-[12px] text-[#333333]">
      <TitleBar />
      <TabBar />
      <Ribbon />
      <div className="flex min-h-0 flex-1">
        <PlanesPanel />
        <Viewport />
      </div>
      <Callout />
    </div>
  );
}
